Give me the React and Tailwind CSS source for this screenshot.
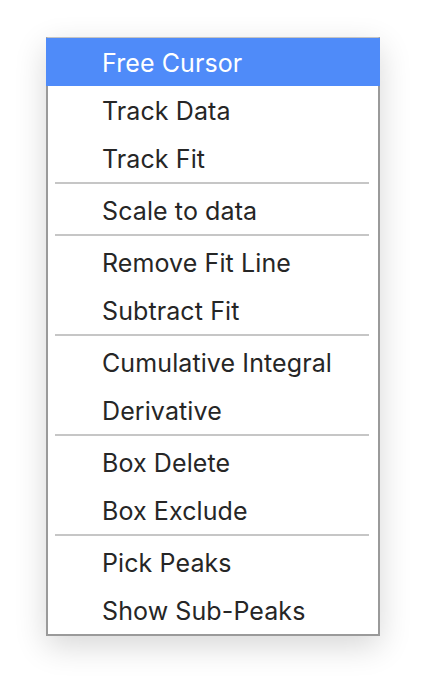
import React from "react";

const groups = [
  ["Free Cursor", "Track Data", "Track Fit"],
  ["Scale to data"],
  ["Remove Fit Line", "Subtract Fit"],
  ["Cumulative Integral", "Derivative"],
  ["Box Delete", "Box Exclude"],
  ["Pick Peaks", "Show Sub-Peaks"],
];

export default function App() {
  return (
    <div className="w-[426px] h-[688px] bg-white pt-[37px] pl-[46px]" style={{ fontFamily: "Inter, 'Noto Sans', sans-serif" }}>
      <div className="w-[334px] bg-white border-t border-t-[#c4c4c4] border-x-2 border-b-2 border-x-[#9a9a9a] border-b-[#9a9a9a] shadow-[0_10px_30px_rgba(0,0,0,0.16)] flex flex-col">
        {groups.map((g, gi) => (
          <React.Fragment key={gi}>
            {gi > 0 && (
              <div className="h-[4px] pl-[7px] pr-[9px]">
                <div className="h-[2px] bg-[#c6c6c6]" />
              </div>
            )}
            {g.map((label) =>
              label === "Free Cursor" ? (
                <div key={label} className="-mx-[2px] h-[48px] pt-[3px] bg-[#4f8bf9] text-white flex items-center pl-[56px] text-[25px] tracking-[0.1px]">
                  {label}
                </div>
              ) : (
                <div key={label} className="h-[48px] pt-[3px] text-[#262626] flex items-center pl-[54px] text-[25px] tracking-[0.1px]">
                  {label}
                </div>
              )
            )}
          </React.Fragment>
        ))}
      </div>
    </div>
  );
}
